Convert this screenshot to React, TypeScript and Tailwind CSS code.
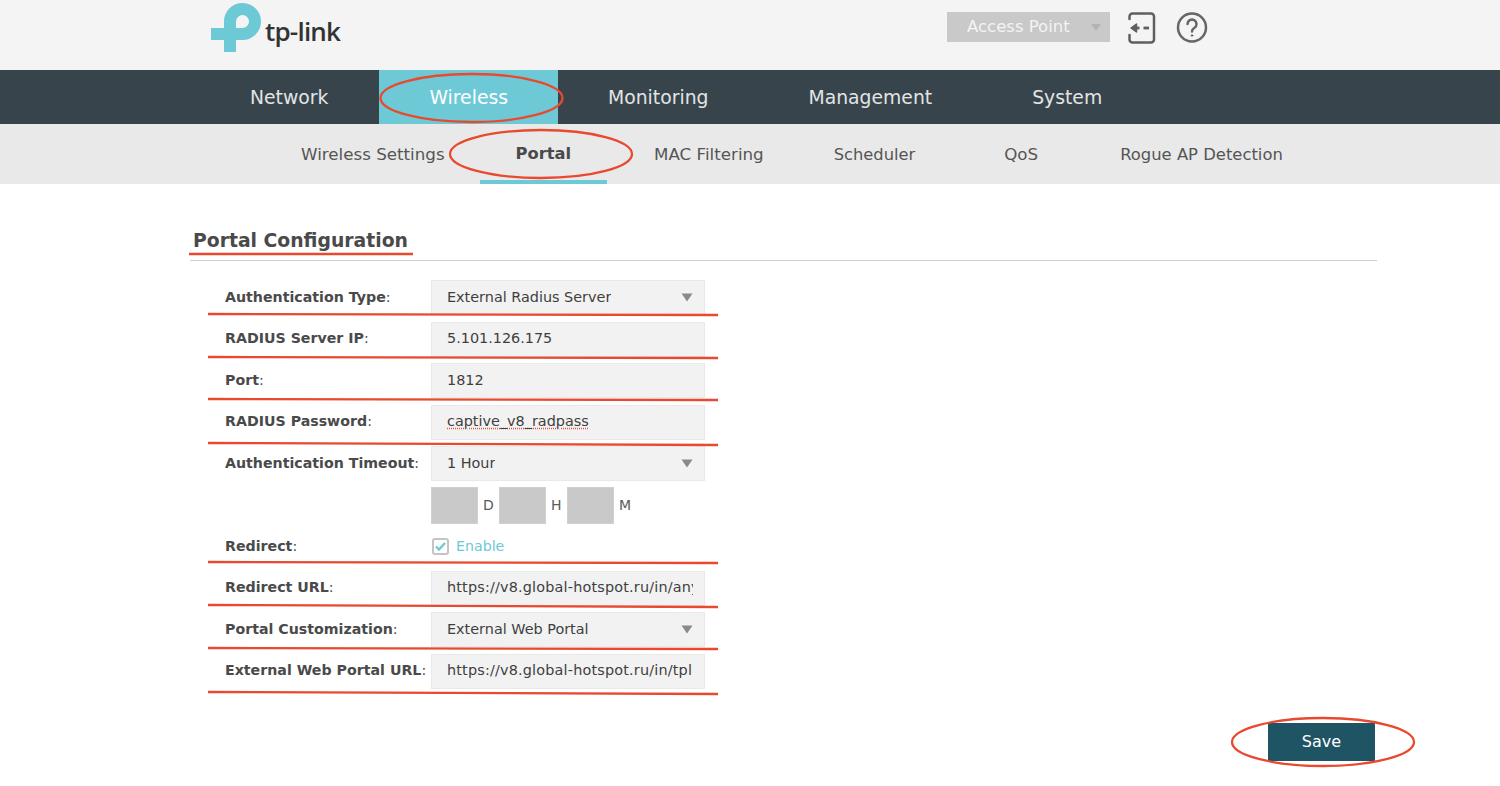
import React from "react";

const font = { fontFamily: '"DejaVu Sans", Verdana, sans-serif' };

function Label({ name }: { name: string }) {
  return (
    <div className="w-[206px] shrink-0 whitespace-nowrap text-[14.2px] font-bold text-[#4a4a4a]">
      {name}
      <span className="font-normal">:</span>
    </div>
  );
}

function Caret({ color = "#8a8a8a" }: { color?: string }) {
  return (
    <svg width="12" height="9" viewBox="0 0 12 9" className="shrink-0">
      <path d="M0.5 0.5H11.5L6 8.5Z" fill={color} />
    </svg>
  );
}

function Field({ value, select, squiggle, url }: { value: string; select?: boolean; squiggle?: boolean; url?: boolean }) {
  return (
    <div className="flex h-[35px] w-[274px] items-center justify-between overflow-hidden whitespace-nowrap border border-[#e9e9e9] bg-[#f2f2f2] pl-[15px] pr-[11px] text-[14.4px] text-[#3f3f3f]">
      <span
        className={
          squiggle
            ? "overflow-hidden underline decoration-[#e0584a] decoration-dotted underline-offset-2"
            : url
              ? "overflow-hidden tracking-[0.18px]"
              : "overflow-hidden"
        }
      >
        {value}
      </span>
      {select ? <Caret /> : null}
    </div>
  );
}

function Row({ name, children }: { name: string; children: React.ReactNode }) {
  return (
    <div className="flex h-[35px] items-center">
      <Label name={name} />
      {children}
    </div>
  );
}

function SmallBox({ unit }: { unit: string }) {
  return (
    <div className="flex w-[68px] items-center">
      <div className="h-[37px] w-[47px] border border-[#d0d0d0] bg-[#c9c9c9]" />
      <span className="ml-[5px] text-[14px] text-[#5a5a5a]">{unit}</span>
    </div>
  );
}

const subItems: { name: string; cls: string }[] = [
  { name: "Wireless Settings", cls: "ml-[265px] pl-[36px] pr-[35px] pt-[1px] text-[#555555]" },
  { name: "Portal", cls: "px-[36px] pt-[5px] text-[16.300px] font-bold text-[#4a4a4a] border-b-4 border-[#6dc9d6]" },
  { name: "MAC Filtering", cls: "ml-[11px] px-[36px] pt-[1px] text-[#555555]" },
  { name: "Scheduler", cls: "px-[34px] pt-[2px] text-[16.300px] text-[#555555]" },
  { name: "QoS", cls: "ml-[8px] px-[47px] pt-[1px] text-[#555555]" },
  { name: "Rogue AP Detection", cls: "px-[35px] pt-[2px] text-[16.400px] text-[#555555]" },
];

const redLines = [
  "M208 314 L718 315",
  "M208 357 L718 358",
  "M208 399 L718 400",
  "M208 443 L718 445",
  "M208 562 L718 563",
  "M208 605 L718 607",
  "M208 648 L718 649",
  "M208 692 L718 694",
  "M189 254 L413 254",
];

export default function App() {
  return (
    <div style={font} className="relative h-[786px] w-[1500px] overflow-hidden bg-white">
      {/* header */}
      <header className="flex h-[70px] items-center bg-[#f4f4f4]">
        <svg width="52" height="54" viewBox="0 0 52 54" className="ml-[210px] shrink-0 self-start">
          <path
            d="M20 52 V21.500 A12.500 12.500 0 1 1 32 34 H1"
            fill="none"
            stroke="#6dc9d6"
            strokeWidth="12"
          />
        </svg>
        <span
          className="ml-[3px] mt-[-9px] w-[76px] shrink-0 whitespace-nowrap text-[26px] font-semibold leading-none tracking-[-0.8px] text-[#333333]"
          style={{ fontFamily: '"Open Sans", sans-serif' }}
        >
          tp-link
        </span>
        <div className="ml-[606px] mt-[-16px] flex h-[30px] w-[163px] shrink-0 items-center justify-between bg-[#c9c9c9] pl-[20px] pr-[9px] text-[16.500px] text-[#f4f4f4]">
          <span>Access Point</span>
          <svg width="10" height="7" viewBox="0 0 10 7" className="shrink-0">
            <path d="M0 0H10L5 7Z" fill="#b3b3b3" />
          </svg>
        </div>
        <svg width="30" height="34" viewBox="0 0 30 34" className="ml-[17px] mt-[-14px] shrink-0" fill="none" stroke="#5f5f5f" strokeWidth="2.500" strokeLinecap="round" strokeLinejoin="round">
          <path d="M2.500 8V5.500A3 3 0 0 1 5.500 2.500H24A3 3 0 0 1 27 5.500V28.500A3 3 0 0 1 24 31.500H5.500A3 3 0 0 1 2.500 28.500V24" />
          <path d="M16.500 17H22" strokeWidth="2.800" strokeLinecap="butt" />
          <path d="M4 17L9.500 13V21Z" fill="#5f5f5f" strokeWidth="1.500" />
          <path d="M9 17H12.500" strokeWidth="2.800" strokeLinecap="butt" />
        </svg>
        <svg width="32" height="33" viewBox="0 0 32 33" className="ml-[19px] mt-[-15px] shrink-0" fill="none" stroke="#666666" strokeWidth="2.500" strokeLinecap="round">
          <circle cx="16" cy="16.500" r="14" />
          <path d="M11.500 13A4.500 4.500 0 1 1 18.500 16.800C16.800 17.900 16 18.600 16 20.500" />
          <circle cx="16" cy="24.500" r="0.800" fill="#666666" strokeWidth="1" />
        </svg>
      </header>

      {/* main nav */}
      <nav className="flex h-[54px] items-stretch bg-[#37444b] pl-[200px] text-[18.800px] text-[#e2e4e5]">
        <div className="flex items-center pl-[50px] pr-[51px] pt-[2px]">Network</div>
        <div className="flex items-center bg-[#6dc9d6] px-[50px] pt-[2px] text-white">Wireless</div>
        <div className="flex items-center px-[50px] pt-[2px]">Monitoring</div>
        <div className="flex items-center px-[50px] pt-[2px]">Management</div>
        <div className="flex items-center px-[50px] pt-[2px]">System</div>
      </nav>

      {/* sub nav */}
      <div className="flex h-[60px] items-stretch bg-[#e9e9e9] text-[16.700px]">
        {subItems.map((s) => (
          <div key={s.name} className={`flex items-center whitespace-nowrap ${s.cls}`}>
            {s.name}
          </div>
        ))}
      </div>

      {/* content */}
      <main className="ml-[190px] w-[1187px] pt-[43px]">
        <h1 className="border-b border-[#cfcfcf] pb-[6px] pl-[3px] text-[18.800px] font-bold leading-[27px] text-[#4a4a4a]">
          Portal Configuration
        </h1>
        <div className="ml-[35px] mt-[19px] flex flex-col gap-[6.500px]">
          <Row name="Authentication Type">
            <Field value="External Radius Server" select />
          </Row>
          <Row name="RADIUS Server IP">
            <Field value="5.101.126.175" />
          </Row>
          <Row name="Port">
            <Field value="1812" />
          </Row>
          <Row name="RADIUS Password">
            <Field value="captive_v8_radpass" squiggle />
          </Row>
          <Row name="Authentication Timeout">
            <Field value="1 Hour" select />
          </Row>
          <div className="flex h-[35px] items-center pl-[206px]">
            <SmallBox unit="D" />
            <SmallBox unit="H" />
            <SmallBox unit="M" />
          </div>
          <Row name="Redirect">
            <div className="flex items-center">
              <div className="ml-[1px] flex h-[17px] w-[17px] items-center justify-center rounded-[3px] border-2 border-[#c4c4c4] bg-white">
                <svg width="11" height="9" viewBox="0 0 11 9" fill="none" stroke="#6dc9d6" strokeWidth="2.400">
                  <path d="M1 4.500L4 7.500L10 1" />
                </svg>
              </div>
              <span className="ml-[7px] text-[14.200px] text-[#6dc9d6]">Enable</span>
            </div>
          </Row>
          <Row name="Redirect URL">
            <Field value="https://v8.global-hotspot.ru/in/any" url />
          </Row>
          <Row name="Portal Customization">
            <Field value="External Web Portal" select />
          </Row>
          <Row name="External Web Portal URL">
            <Field value="https://v8.global-hotspot.ru/in/tplink" url />
          </Row>
        </div>
        <div className="mt-[34px] flex justify-end pr-[2px]">
          <button className="h-[38px] w-[107px] bg-[#1f5464] text-[16px] text-white">Save</button>
        </div>
      </main>

      {/* hand-drawn annotations lying over the page */}
      <svg width="1500" height="786" viewBox="0 0 1500 786" className="pointer-events-none absolute left-0 top-0" fill="none" stroke="#e8492f" strokeWidth="2.300">
        <ellipse cx="471.500" cy="98" rx="91" ry="24" />
        <ellipse cx="541" cy="154" rx="91" ry="24" />
        <ellipse cx="1323" cy="742" rx="91" ry="24" />
        {redLines.map((d) => (
          <path key={d} d={d} />
        ))}
      </svg>
    </div>
  );
}
